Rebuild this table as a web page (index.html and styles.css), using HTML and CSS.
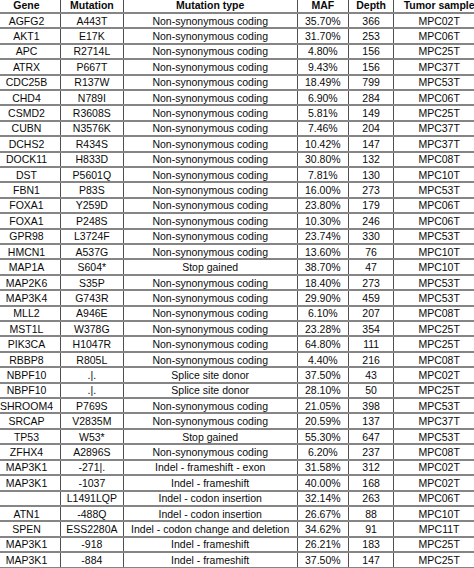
FILE: index.html
```html
<!DOCTYPE html>
<html>
<head>
<meta charset="utf-8">
<link rel="stylesheet" href="styles.css">
</head>
<body>
<div class="frame">
<table class="mut">
<colgroup>
<col class="c-gene"><col class="c-mut"><col class="c-type"><col class="c-maf"><col class="c-depth"><col class="c-tumor">
</colgroup>
<thead>
<tr><th>Gene</th><th>Mutation</th><th>Mutation type</th><th>MAF</th><th>Depth</th><th>Tumor sample</th></tr>
</thead>
<tbody>
<tr><td>AGFG2</td><td>A443T</td><td>Non-synonymous coding</td><td>35.70%</td><td>366</td><td>MPC02T</td></tr>
<tr><td>AKT1</td><td>E17K</td><td>Non-synonymous coding</td><td>31.70%</td><td>253</td><td>MPC06T</td></tr>
<tr><td>APC</td><td>R2714L</td><td>Non-synonymous coding</td><td>4.80%</td><td>156</td><td>MPC25T</td></tr>
<tr><td>ATRX</td><td>P667T</td><td>Non-synonymous coding</td><td>9.43%</td><td>156</td><td>MPC37T</td></tr>
<tr><td>CDC25B</td><td>R137W</td><td>Non-synonymous coding</td><td>18.49%</td><td>799</td><td>MPC53T</td></tr>
<tr><td>CHD4</td><td>N789I</td><td>Non-synonymous coding</td><td>6.90%</td><td>284</td><td>MPC06T</td></tr>
<tr><td>CSMD2</td><td>R3608S</td><td>Non-synonymous coding</td><td>5.81%</td><td>149</td><td>MPC25T</td></tr>
<tr><td>CUBN</td><td>N3576K</td><td>Non-synonymous coding</td><td>7.46%</td><td>204</td><td>MPC37T</td></tr>
<tr><td>DCHS2</td><td>R434S</td><td>Non-synonymous coding</td><td>10.42%</td><td>147</td><td>MPC37T</td></tr>
<tr><td>DOCK11</td><td>H833D</td><td>Non-synonymous coding</td><td>30.80%</td><td>132</td><td>MPC08T</td></tr>
<tr><td>DST</td><td>P5601Q</td><td>Non-synonymous coding</td><td>7.81%</td><td>130</td><td>MPC10T</td></tr>
<tr><td>FBN1</td><td>P83S</td><td>Non-synonymous coding</td><td>16.00%</td><td>273</td><td>MPC53T</td></tr>
<tr><td>FOXA1</td><td>Y259D</td><td>Non-synonymous coding</td><td>23.80%</td><td>179</td><td>MPC06T</td></tr>
<tr><td>FOXA1</td><td>P248S</td><td>Non-synonymous coding</td><td>10.30%</td><td>246</td><td>MPC06T</td></tr>
<tr><td>GPR98</td><td>L3724F</td><td>Non-synonymous coding</td><td>23.74%</td><td>330</td><td>MPC53T</td></tr>
<tr><td>HMCN1</td><td>A537G</td><td>Non-synonymous coding</td><td>13.60%</td><td>76</td><td>MPC10T</td></tr>
<tr><td>MAP1A</td><td>S604*</td><td>Stop gained</td><td>38.70%</td><td>47</td><td>MPC10T</td></tr>
<tr><td>MAP2K6</td><td>S35P</td><td>Non-synonymous coding</td><td>18.40%</td><td>273</td><td>MPC53T</td></tr>
<tr><td>MAP3K4</td><td>G743R</td><td>Non-synonymous coding</td><td>29.90%</td><td>459</td><td>MPC53T</td></tr>
<tr><td>MLL2</td><td>A946E</td><td>Non-synonymous coding</td><td>6.10%</td><td>207</td><td>MPC08T</td></tr>
<tr><td>MST1L</td><td>W378G</td><td>Non-synonymous coding</td><td>23.28%</td><td>354</td><td>MPC25T</td></tr>
<tr><td>PIK3CA</td><td>H1047R</td><td>Non-synonymous coding</td><td>64.80%</td><td>111</td><td>MPC25T</td></tr>
<tr><td>RBBP8</td><td>R805L</td><td>Non-synonymous coding</td><td>4.40%</td><td>216</td><td>MPC08T</td></tr>
<tr><td>NBPF10</td><td>.|.</td><td>Splice site donor</td><td>37.50%</td><td>43</td><td>MPC02T</td></tr>
<tr><td>NBPF10</td><td>.|.</td><td>Splice site donor</td><td>28.10%</td><td>50</td><td>MPC25T</td></tr>
<tr><td>SHROOM4</td><td>P769S</td><td>Non-synonymous coding</td><td>21.05%</td><td>398</td><td>MPC53T</td></tr>
<tr><td>SRCAP</td><td>V2835M</td><td>Non-synonymous coding</td><td>20.59%</td><td>137</td><td>MPC37T</td></tr>
<tr><td>TP53</td><td>W53*</td><td>Stop gained</td><td>55.30%</td><td>647</td><td>MPC53T</td></tr>
<tr><td>ZFHX4</td><td>A2896S</td><td>Non-synonymous coding</td><td>6.20%</td><td>237</td><td>MPC08T</td></tr>
<tr><td>MAP3K1</td><td>-271|.</td><td>Indel - frameshift - exon</td><td>31.58%</td><td>312</td><td>MPC02T</td></tr>
<tr><td>MAP3K1</td><td>-1037</td><td>Indel - frameshift</td><td>40.00%</td><td>168</td><td>MPC02T</td></tr>
<tr><td></td><td>L1491LQP</td><td>Indel - codon insertion</td><td>32.14%</td><td>263</td><td>MPC06T</td></tr>
<tr><td>ATN1</td><td>-488Q</td><td>Indel - codon insertion</td><td>26.67%</td><td>88</td><td>MPC10T</td></tr>
<tr><td>SPEN</td><td>ESS2280A</td><td>Indel - codon change and deletion</td><td>34.62%</td><td>91</td><td>MPC11T</td></tr>
<tr><td>MAP3K1</td><td>-918</td><td>Indel - frameshift</td><td>26.21%</td><td>183</td><td>MPC25T</td></tr>
<tr><td>MAP3K1</td><td>-884</td><td>Indel - frameshift</td><td>37.50%</td><td>147</td><td>MPC25T</td></tr>
</tbody>
</table>
</div>
</body>
</html>
```
FILE: styles.css
```css
html, body {
  margin: 0;
  padding: 0;
  background: #ffffff;
}
.frame {
  width: 474px;
  height: 568px;
  overflow: hidden;
}
.mut {
  border-collapse: collapse;
  table-layout: fixed;
  width: 492px;
  margin-left: -8px;
  margin-top: -3.5px;
  font-family: "Liberation Sans", Arial, sans-serif;
  font-size: 10.5px;
  color: #0a0a0a;
}
.c-gene { width: 68px; }
.c-mut { width: 62.7px; }
.c-type { width: 174px; }
.c-maf { width: 51.3px; }
.c-depth { width: 45.3px; }
.c-tumor { width: 90.7px; }
.mut tr {
  height: 15.42px;
}
.mut th, .mut td {
  padding: 0;
  text-align: center;
  vertical-align: middle;
  white-space: nowrap;
  line-height: 12px;
  border-top: 2px solid #858585;
  border-bottom: 2px solid #858585;
  border-left: 1px solid #4f4f4f;
  border-right: 1px solid #4f4f4f;
}
.mut th {
  font-weight: bold;
}
```
